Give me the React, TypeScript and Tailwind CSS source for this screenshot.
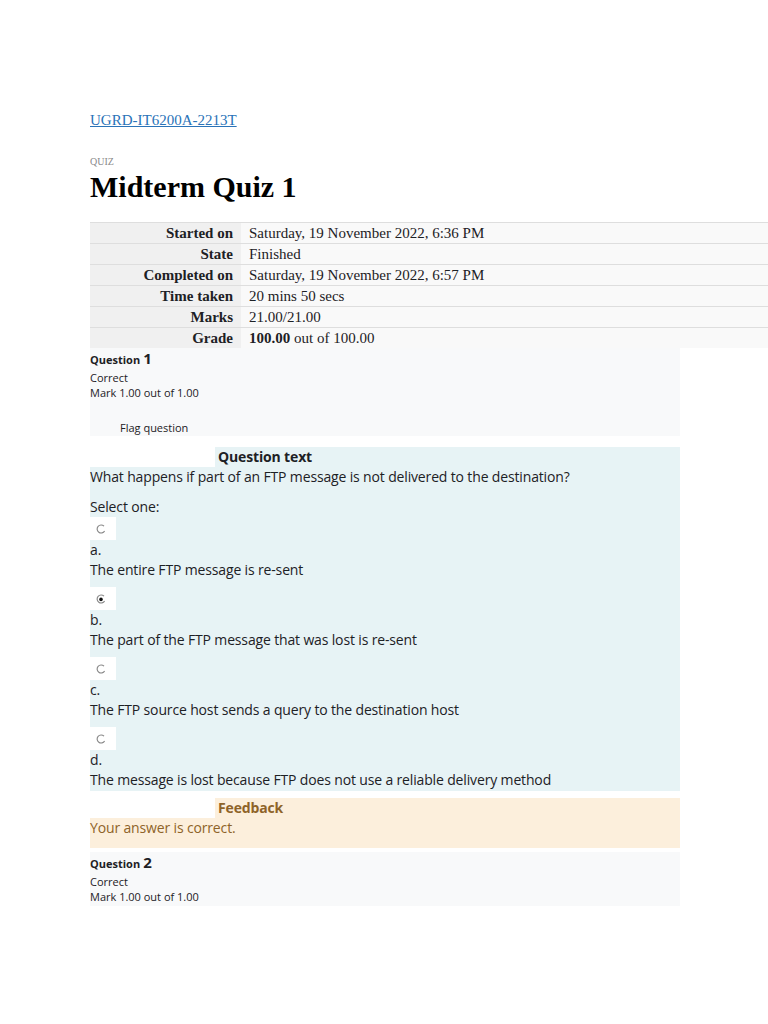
import React from "react";

const serif = "font-['Liberation_Serif',serif]";
const sans = "font-['Open_Sans',sans-serif]";

function Radio({ checked }: { checked?: boolean }) {
  return (
    <div className="flex h-[23px] w-[26px] items-center bg-white pl-[6px]">
      <svg width="10" height="10" viewBox="0 0 10 10">
        <path d="M8 2.2 A4 4 0 1 0 8.6 7" fill="none" stroke="#8a8a8a" strokeWidth="1.2" />
        {checked && <circle cx="5" cy="5.4" r="1.8" fill="#111" />}
      </svg>
    </div>
  );
}

const summary: [string, React.ReactNode][] = [
  ["Started on", "Saturday, 19 November 2022, 6:36 PM"],
  ["State", "Finished"],
  ["Completed on", "Saturday, 19 November 2022, 6:57 PM"],
  ["Time taken", "20 mins 50 secs"],
  ["Marks", "21.00/21.00"],
  [
    "Grade",
    <>
      <b>100.00</b> out of 100.00
    </>,
  ],
];

const options = [
  { key: "a.", text: "The entire FTP message is re-sent" },
  { key: "b.", text: "The part of the FTP message that was lost is re-sent", checked: true },
  { key: "c.", text: "The FTP source host sends a query to the destination host" },
  { key: "d.", text: "The message is lost because FTP does not use a reliable delivery method" },
];

function QuestionInfo({ n, flag }: { n: number; flag?: boolean }) {
  return (
    <div className={`w-[590px] bg-[#f8f9fa] pt-[3px] ${sans} text-[11px] leading-[15px] text-[#1d2125]`}>
      <div className="flex items-baseline">
        <span className="font-bold">Question</span>
        <span className="ml-[3px] text-[15px] font-bold">{n}</span>
      </div>
      <div className="mt-[3px]">Correct</div>
      <div>Mark 1.00 out of 1.00</div>
      {flag ? <div className="mt-[20px] pb-[1px] pl-[30px]">Flag question</div> : <div className="h-[2px]" />}
    </div>
  );
}

export default function App() {
  return (
    <div className="min-h-[1024px] bg-white pl-[90px] pt-[107px]">
      <a href="#" className={`${serif} text-[15px] leading-[18px] text-[#2a73b8] underline`}>
        UGRD-IT6200A-2213T
      </a>
      <div className={`${serif} mt-[25px] text-[10px] uppercase leading-[12px] text-[#8a8a8a]`}>Quiz</div>
      <h1 className={`${serif} mt-[2px] text-[30px] font-bold leading-[34px] text-black`}>Midterm Quiz 1</h1>

      <table className={`${serif} mt-[18px] w-[678px] border-collapse text-[15px] leading-[20px] text-[#1d2125]`}>
        <tbody>
          {summary.map(([label, value], i) => (
            <tr key={i} className="border-t border-[#dedede]">
              <th className="w-[151px] bg-[#f0f0f0] pr-[8px] text-right font-bold">{label}</th>
              <td className="bg-[#f9f9f9] pl-[8px]">{value}</td>
            </tr>
          ))}
        </tbody>
      </table>

      <QuestionInfo n={1} flag />

      <div className={`${sans} mt-[11px] w-[590px] text-[14px] tracking-[-0.15px] text-[#1d2125]`}>
        <div className="ml-[125px] bg-[#e7f3f5] pl-[3px] font-bold leading-[20px]">Question text</div>
        <div className="bg-[#e7f3f5] pb-[1px]">
          <div className="leading-[20px]">What happens if part of an FTP message is not delivered to the destination?</div>
          <div className="mt-[10px] leading-[20px]">Select one:</div>
          {options.map((o, i) => (
            <div key={o.key} className={i > 0 ? "mt-[7px]" : ""}>
              <Radio checked={o.checked} />
              <div className="leading-[20px]">{o.key}</div>
              <div className="leading-[20px]">{o.text}</div>
            </div>
          ))}
        </div>
      </div>

      <div className={`${sans} mt-[7px] w-[590px] text-[14px] tracking-[-0.15px] text-[#8e6328]`}>
        <div className="ml-[125px] bg-[#fcefdc] pl-[3px] font-bold leading-[20px]">Feedback</div>
        <div className="bg-[#fcefdc] pb-[10px] leading-[20px]">Your answer is correct.</div>
      </div>

      <div className="mt-[4px]">
        <QuestionInfo n={2} />
      </div>
    </div>
  );
}
